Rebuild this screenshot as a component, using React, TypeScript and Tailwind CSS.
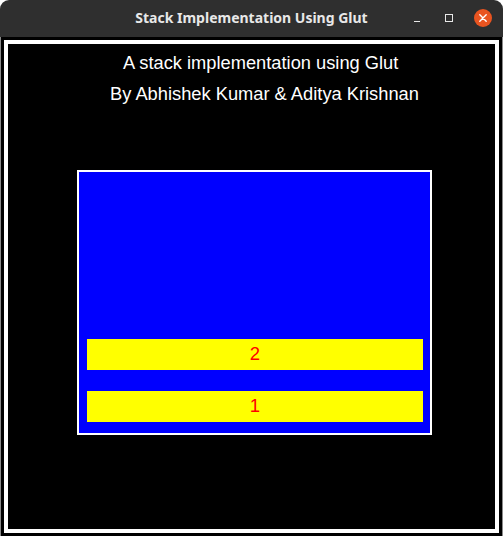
import React from "react";

export default function App() {
  return (
    <div className="w-[503px] h-[536px] bg-white overflow-hidden">
      <div className="flex flex-col w-full h-full">
        <div className="relative h-[37px] shrink-0 bg-[#2f2f2f] rounded-t-[9px] flex items-center justify-center">
          <span
            className="text-[14px] font-bold text-[#e8e8e8] leading-none pb-[1px]"
            style={{ fontFamily: '"Noto Sans", "DejaVu Sans", sans-serif' }}
          >
            Stack Implementation Using Glut
          </span>
          <div className="absolute right-[11px] top-[9px] flex items-center">
            <svg width="10" height="10" viewBox="0 0 10 10" className="mr-[22px]">
              <line x1="2" y1="8.5" x2="8" y2="8.5" stroke="#e8e8e8" strokeWidth="1" />
            </svg>
            <svg width="10" height="10" viewBox="0 0 10 10" className="mr-[20px]">
              <rect x="1.5" y="1.5" width="7" height="7" fill="none" stroke="#e8e8e8" strokeWidth="1" />
            </svg>
            <svg width="18" height="18" viewBox="0 0 18 18">
              <circle cx="9" cy="9" r="9" fill="#e95420" />
              <path d="M5.8 5.8 L12.2 12.2 M12.2 5.8 L5.8 12.2" stroke="#ffffff" strokeWidth="1.4" strokeLinecap="round" />
            </svg>
          </div>
        </div>
        <div className="flex-1 bg-black border-x border-[#8a8a8a] p-[3px]">
          <div
            className="h-full border-4 border-white flex flex-col items-start text-white"
            style={{ fontFamily: '"Liberation Sans", Arial, sans-serif' }}
          >
            <div className="ml-[115px] mt-[9px] text-[18.3px] leading-[20px]">
              A stack implementation using Glut
            </div>
            <div className="ml-[102px] mt-[11px] text-[18.3px] leading-[20px]">
              By Abhishek Kumar &amp; Aditya Krishnan
            </div>
            <div className="ml-[69px] mt-[66px] w-[355px] h-[265px] border-2 border-white bg-[#0000ff] flex flex-col justify-end pl-[8px] pr-[7px] pb-[11px] gap-[21px]">
              <div className="h-[31px] bg-[#ffff00] flex items-center justify-center text-[#ff0000] text-[18.5px] leading-none">
                2
              </div>
              <div className="h-[31px] bg-[#ffff00] flex items-center justify-center text-[#ff0000] text-[18.5px] leading-none">
                1
              </div>
            </div>
          </div>
        </div>
      </div>
    </div>
  );
}
